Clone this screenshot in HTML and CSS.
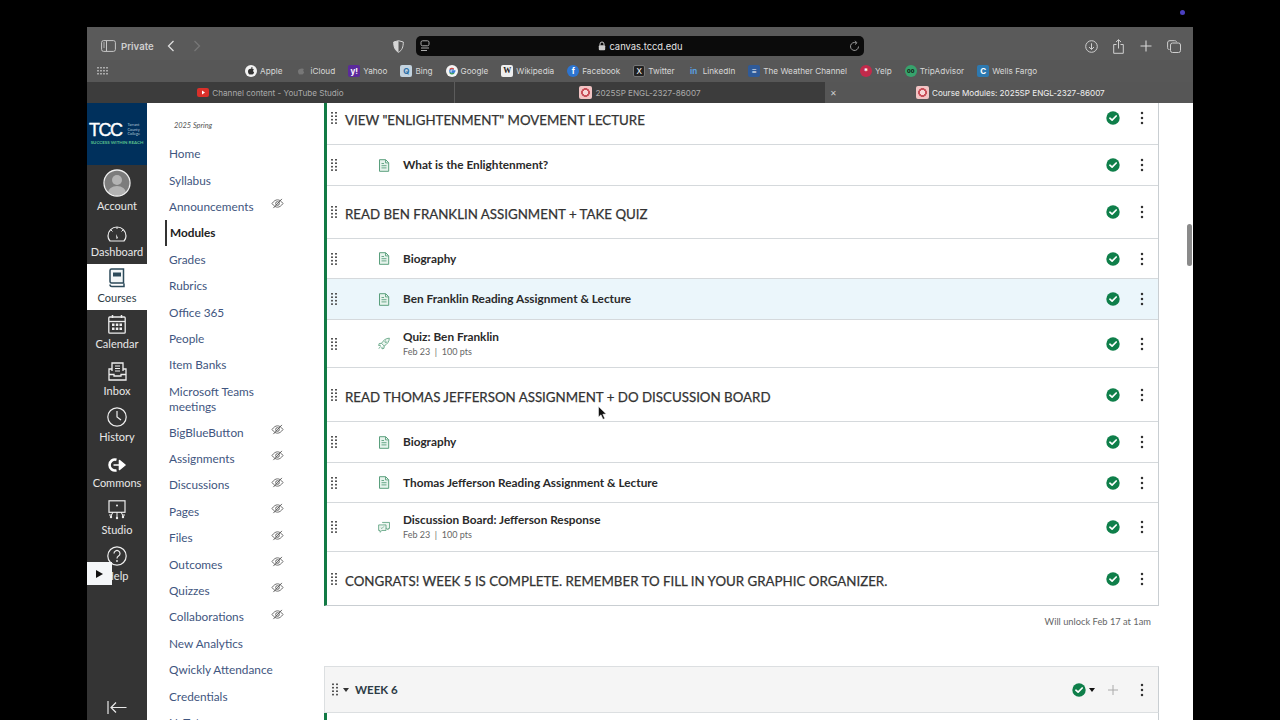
FILE: index.html
```html
<!DOCTYPE html>
<html lang="en">
<head>
<meta charset="utf-8">
<title>Course Modules: 2025SP ENGL-2327-86007</title>
<link rel="stylesheet" href="styles.css">
</head>
<body>
<svg class="defs" width="0" height="0" aria-hidden="true">
  <symbol id="drag" viewBox="0 0 6 12"><g fill="#555"><rect x="0" y="0" width="2" height="1.6"/><rect x="4" y="0" width="2" height="1.6"/><rect x="0" y="3.4" width="2" height="1.6"/><rect x="4" y="3.4" width="2" height="1.6"/><rect x="0" y="6.9" width="2" height="1.6"/><rect x="4" y="6.9" width="2" height="1.6"/><rect x="0" y="10.3" width="2" height="1.6"/><rect x="4" y="10.3" width="2" height="1.6"/></g></symbol>
  <symbol id="check" viewBox="0 0 14 14"><circle cx="7" cy="7" r="6.7" fill="#0f7f4a"/><path d="M3.9 7.2 6.1 9.2 10.2 5" fill="none" stroke="#fff" stroke-width="1.7" stroke-linecap="round" stroke-linejoin="round"/></symbol>
  <symbol id="kebab" viewBox="0 0 4 14"><g fill="#333"><circle cx="2" cy="2" r="1.25"/><circle cx="2" cy="7" r="1.25"/><circle cx="2" cy="12" r="1.25"/></g></symbol>
  <symbol id="page" viewBox="0 0 12 13"><path d="M1.5.7h6.2l3 3v8.6h-9.200z" fill="#e6f3ec" stroke="#5a9f7d"/><path d="M7.5.9v3h3M3.5 4.500h2.500M3.500 6.700h5M3.500 8.900h5" fill="none" stroke="#5a9f7d" stroke-width=".9"/></symbol>
  <symbol id="eye" viewBox="0 0 14 12"><path d="M1 6C3 3.200 5 2 7 2s4 1.200 6 4c-2 2.800-4 4-6 4S3 8.800 1 6z" fill="none" stroke="#555" stroke-width=".9"/><circle cx="7" cy="6" r="2" fill="none" stroke="#555" stroke-width="1"/><path d="M2.500 11 11.800 1" stroke="#555" stroke-width="1"/></symbol>
</svg>

<div class="window">
  <header class="chrome">
    <div class="toolbar">
      <div class="tool-left">
        <svg class="ti" width="15" height="12" viewBox="0 0 15 12"><rect x=".6" y=".6" width="13.800" height="10.800" rx="2" fill="none" stroke="#c8c8c8"/><path d="M5.500 1v10" stroke="#c8c8c8"/><path d="M2 3h2M2 5h2M2 7h2" stroke="#c8c8c8" stroke-width=".8"/></svg>
        <span class="private">Private</span>
        <svg class="back" width="8" height="12" viewBox="0 0 8 12"><path d="M6.500 1 1.500 6l5 5" fill="none" stroke="#ddd" stroke-width="1.300"/></svg>
        <svg class="fwd" width="8" height="12" viewBox="0 0 8 12"><path d="M1.500 1l5 5-5 5" fill="none" stroke="#777" stroke-width="1.300"/></svg>
      </div>
      <svg class="shield" width="11" height="13" viewBox="0 0 11 13"><path d="M5.500.7 10.300 2c0 5-1.200 8.300-4.800 10.300C1.900 10.300.7 7 .7 2z" fill="none" stroke="#d6d6d6"/><path d="M5.500.7v11.600C1.900 10.300.7 7 .7 2z" fill="#d6d6d6"/></svg>
      <div class="urlbar">
        <svg class="reader" width="10" height="12" viewBox="0 0 10 12"><rect x="1" y=".8" width="8" height="5" rx="1.500" fill="none" stroke="#aaa"/><path d="M1 8h8M1 10.500h6" stroke="#aaa"/></svg>
        <span class="url"><svg width="8" height="10" viewBox="0 0 8 10"><path d="M2 4.500V3a2 2 0 0 1 4 0v1.500" fill="none" stroke="#ccc"/><rect x=".8" y="4.300" width="6.400" height="5" rx="1" fill="#ccc"/></svg>canvas.tccd.edu</span>
        <svg class="reload" width="11" height="12" viewBox="0 0 11 12"><path d="M9.500 6.500a4 4 0 1 1-2.400-3.700" fill="none" stroke="#999"/><path d="M6 .8 8 2.800 6 4.500" fill="none" stroke="#999"/></svg>
      </div>
      <div class="tool-right">
        <svg width="13" height="13" viewBox="0 0 13 13"><circle cx="6.500" cy="6.500" r="5.800" fill="none" stroke="#cfcfcf"/><path d="M6.500 3.300v6M4 7l2.500 2.500L9 7" fill="none" stroke="#cfcfcf"/></svg>
        <svg width="11" height="15" viewBox="0 0 11 15"><path d="M3.500 5.500H.7v8.800h9.600V5.500H7.500M5.500 9.500V.8M3 3l2.500-2.300L8 3" fill="none" stroke="#cfcfcf"/></svg>
        <svg width="12" height="12" viewBox="0 0 12 12"><path d="M6 .5v11M.5 6h11" stroke="#d8d8d8" stroke-width="1.100"/></svg>
        <svg width="14" height="13" viewBox="0 0 14 13"><rect x="3.500" y="3" width="10" height="9.500" rx="2" fill="none" stroke="#cfcfcf"/><path d="M2.500 9.500C1.200 9.500.6 9 .6 7.500V3C.6 1.500 1.200.7 3 .7h4.500c1.200 0 2 .5 2.200 1.500" fill="none" stroke="#cfcfcf"/></svg>
      </div>
    </div>
    <div class="bookmarks">
      <svg class="apps" width="11" height="8" viewBox="0 0 11 8"><g fill="#aaa"><rect x="0" y="0" width="2" height="1.500"/><rect x="3" y="0" width="2" height="1.500"/><rect x="6" y="0" width="2" height="1.500"/><rect x="9" y="0" width="2" height="1.500"/><rect x="0" y="3" width="2" height="1.500"/><rect x="3" y="3" width="2" height="1.500"/><rect x="6" y="3" width="2" height="1.500"/><rect x="9" y="3" width="2" height="1.500"/><rect x="0" y="6" width="2" height="1.500"/><rect x="3" y="6" width="2" height="1.500"/><rect x="6" y="6" width="2" height="1.500"/><rect x="9" y="6" width="2" height="1.500"/></g></svg>
      <ul class="marks">
        <li><svg class="fav" width="12" height="12" viewBox="0 0 12 12"><circle cx="6" cy="6" r="6" fill="#f2f2f2"/><path d="M6 4c1-.6 2.200-.5 2.800.4-1 .7-.9 2.200.3 2.800C8.600 8.500 8 9.500 7.200 9.500 6.600 9.500 6.500 9.200 6 9.200s-.7.300-1.200.3C3.800 9.500 3 7.800 3 6.500 3 4.500 4.800 3.400 6 4zM6 3.600C6 2.700 6.600 2 7.500 2c0 .9-.6 1.600-1.500 1.600z" fill="#333"/></svg>Apple</li>
        <li><svg class="fav" width="12" height="12" viewBox="0 0 12 12"><path d="M6 3.800c1-.6 2.300-.5 2.900.4-1 .7-.9 2.200.3 2.800-.5 1.400-1.200 2.500-2 2.500-.6 0-.7-.3-1.200-.3s-.7.300-1.200.3C3.800 9.500 3 7.800 3 6.500c0-2 1.800-3.100 3-2.700z" fill="#777"/></svg>iCloud</li>
        <li><span class="fav tile yahoo">y!</span>Yahoo</li>
        <li><span class="fav tile bing">Q</span>Bing</li>
        <li><svg class="fav" width="12" height="12" viewBox="0 0 12 12"><circle cx="6" cy="6" r="6" fill="#f4f4f4"/><path d="M9.500 5.800H6.200v1.300h2A2.300 2.300 0 1 1 7.700 4.400" fill="none" stroke="#3c7fd9" stroke-width="1.300"/><path d="M3.800 4.500A2.600 2.600 0 0 1 7.700 4.200" fill="none" stroke="#d9483b" stroke-width="1.300"/><path d="M3.700 7.500A2.600 2.600 0 0 0 7.900 8" fill="none" stroke="#3f9f5a" stroke-width="1.300"/></svg>Google</li>
        <li><span class="fav tile wiki">W</span>Wikipedia</li>
        <li><span class="fav round fb">f</span>Facebook</li>
        <li><span class="fav tile tw">X</span>Twitter</li>
        <li><span class="fav tile li">in</span>LinkedIn</li>
        <li><span class="fav tile twc">≡</span>The Weather Channel</li>
        <li><span class="fav round yelp">*</span>Yelp</li>
        <li><span class="fav round trip">oo</span>TripAdvisor</li>
        <li><span class="fav tile wf">C</span>Wells Fargo</li>
      </ul>
    </div>
    <div class="tabs">
      <div class="tab t1"><svg class="yt" width="12" height="9" viewBox="0 0 12 9"><rect width="12" height="9" rx="2" fill="#d9302a"/><path d="M5 2.500 8 4.500 5 6.500z" fill="#fff"/></svg>Channel content - YouTube Studio</div>
      <div class="tab t2"><span class="tabico"></span>2025SP ENGL-2327-86007</div>
      <div class="tab t3"><span class="tabx">✕</span><span class="t3in"><span class="tabico"></span>Course Modules: 2025SP ENGL-2327-86007</span></div>
    </div>
  </header>

  <div class="app">
    <nav class="gnav">
      <div class="logo"><div class="logo-top"><span class="tcc">TCC</span><span class="tcc-sub">Tarrant<br>County<br>College</span></div><div class="tcc-tag">SUCCESS WITHIN REACH</div></div>
      <a class="gitem acct"><svg width="28" height="28" viewBox="0 0 28 28"><defs><clipPath id="av"><circle cx="14" cy="14" r="12.500"/></clipPath></defs><circle cx="14" cy="14" r="12.500" fill="#7c7c7c"/><g clip-path="url(#av)" fill="#b3b3b3"><circle cx="14" cy="11" r="5"/><ellipse cx="14" cy="24" rx="9" ry="7"/></g><circle cx="14" cy="14" r="13" fill="none" stroke="#f0f0f0" stroke-width="1.300"/></svg><span>Account</span></a>
      <a class="gitem"><svg width="20" height="16" viewBox="0 0 20 16"><path d="M3 15C1.600 13.500 1 11.500 1 10a9 9 0 0 1 18 0c0 1.500-.6 3.500-2 5z" fill="none" stroke="#eee" stroke-width="1.200"/><path d="M9 8l2 4-1.500 1z" fill="#eee"/><path d="M10 1v2M4 4l1.500 1.500M16 4l-1.500 1.500" stroke="#eee"/></svg><span>Dashboard</span></a>
      <a class="gitem active"><svg width="16" height="20" viewBox="0 0 16 20"><path d="M2.500 1h12v14h-12A1.500 1.500 0 0 1 1 13.500v-11A1.500 1.500 0 0 1 2.500 1z" fill="#f2f6f7" stroke="#2c4a5a" stroke-width="1.500"/><path d="M4 4.500h8v4H4z" fill="#2c4a5a"/><path d="M1 16.500c0 1.500 1 2 2 2h12v-3" fill="none" stroke="#2c4a5a" stroke-width="1.500"/></svg><span>Courses</span></a>
      <a class="gitem"><svg width="18" height="19" viewBox="0 0 18 19"><rect x=".8" y="2" width="16.400" height="16.200" rx="1" fill="none" stroke="#eee" stroke-width="1.300"/><path d="M1 6.500h16" stroke="#eee" stroke-width="1.300"/><path d="M4.500 0v3M13.500 0v3" stroke="#eee" stroke-width="1.500"/><g fill="#eee"><rect x="4" y="8.500" width="2.500" height="2.500"/><rect x="7.800" y="8.500" width="2.500" height="2.500"/><rect x="11.500" y="8.500" width="2.500" height="2.500"/><rect x="4" y="12.500" width="2.500" height="2.500"/><rect x="7.800" y="12.500" width="2.500" height="2.500"/><rect x="11.500" y="12.500" width="2.500" height="2.500"/></g></svg><span>Calendar</span></a>
      <a class="gitem"><svg width="19" height="19" viewBox="0 0 19 19"><path d="M4 9V1h11v8" fill="none" stroke="#eee" stroke-width="1.300"/><path d="M7 4h5M7 6.500h5M7 9h5" stroke="#eee" stroke-width="1.200"/><path d="M4 7H1v11h17V7h-3M1 12.500h5v1.500h7v-1.500h5" fill="none" stroke="#eee" stroke-width="1.300"/></svg><span>Inbox</span></a>
      <a class="gitem"><svg width="20" height="20" viewBox="0 0 20 20"><circle cx="10" cy="10" r="9.200" fill="none" stroke="#eee" stroke-width="1.200"/><path d="M10 4v6l4 3" fill="none" stroke="#eee" stroke-width="1.200"/></svg><span>History</span></a>
      <a class="gitem"><svg width="20" height="16" viewBox="0 0 20 16"><path d="M9.500 2.700A5.500 5.500 0 1 0 9.500 13.300" fill="none" stroke="#fff" stroke-width="2.600"/><path d="M6.500 8H15M12.500 3.500 18 8l-5.500 4.500z" fill="#fff" stroke="#fff" stroke-width="1.600" stroke-linejoin="round"/></svg><span>Commons</span></a>
      <a class="gitem"><svg width="20" height="20" viewBox="0 0 20 20"><rect x="2" y=".8" width="16" height="11.500" fill="none" stroke="#eee" stroke-width="1.200"/><circle cx="10" cy="5.500" r="1" fill="#eee"/><path d="M10 12v5M6 12l-2 4M14 12l2 4M2 15h3M15 15h3" stroke="#eee"/><circle cx="10" cy="18" r="1.200" fill="#eee"/><circle cx="4" cy="17" r="1.200" fill="#eee"/><circle cx="16" cy="17" r="1.200" fill="#eee"/></svg><span>Studio</span></a>
      <a class="gitem"><svg width="20" height="20" viewBox="0 0 20 20"><circle cx="10" cy="10" r="9.200" fill="none" stroke="#eee" stroke-width="1.200"/><path d="M7 7.500a3 3 0 1 1 4.500 2.600C10.500 10.700 10 11 10 12.500" fill="none" stroke="#eee" stroke-width="1.200"/><circle cx="10" cy="15" r=".9" fill="#eee"/></svg><span>Help</span></a>
      <div class="collapse"><svg width="20" height="13" viewBox="0 0 20 13"><path d="M1 0v13M19.500 6.500H4M9 1.500l-5 5 5 5" fill="none" stroke="#e8e8e8" stroke-width="1.200"/></svg></div>
    </nav>

    <aside class="cnav">
      <div class="term">2025 Spring</div>
      <ul class="clist">
        <li><a>Home</a></li>
        <li><a>Syllabus</a></li>
        <li><a>Announcements</a><svg class="eye"><use href="#eye"/></svg></li>
        <li class="current"><a>Modules</a></li>
        <li><a>Grades</a></li>
        <li><a>Rubrics</a></li>
        <li><a>Office 365</a></li>
        <li><a>People</a></li>
        <li><a>Item Banks</a></li>
        <li class="two"><a>Microsoft Teams<br>meetings</a></li>
        <li><a>BigBlueButton</a><svg class="eye"><use href="#eye"/></svg></li>
        <li><a>Assignments</a><svg class="eye"><use href="#eye"/></svg></li>
        <li><a>Discussions</a><svg class="eye"><use href="#eye"/></svg></li>
        <li><a>Pages</a><svg class="eye"><use href="#eye"/></svg></li>
        <li><a>Files</a><svg class="eye"><use href="#eye"/></svg></li>
        <li><a>Outcomes</a><svg class="eye"><use href="#eye"/></svg></li>
        <li><a>Quizzes</a><svg class="eye"><use href="#eye"/></svg></li>
        <li><a>Collaborations</a><svg class="eye"><use href="#eye"/></svg></li>
        <li><a>New Analytics</a></li>
        <li><a>Qwickly Attendance</a></li>
        <li><a>Credentials</a></li>
        <li><a>NuTutor</a></li>
      </ul>
    </aside>

    <main class="main">
      <section class="module">
        <div class="row head h54 first"><svg class="drag"><use href="#drag"/></svg><h3>VIEW "ENLIGHTENMENT" MOVEMENT LECTURE</h3><svg class="ok"><use href="#check"/></svg><svg class="keb"><use href="#kebab"/></svg></div>
        <div class="row item h41"><svg class="drag"><use href="#drag"/></svg><svg class="ic"><use href="#page"/></svg><div class="txt"><b>What is the Enlightenment?</b></div><svg class="ok"><use href="#check"/></svg><svg class="keb"><use href="#kebab"/></svg></div>
        <div class="row head h53"><svg class="drag"><use href="#drag"/></svg><h3>READ BEN FRANKLIN ASSIGNMENT + TAKE QUIZ</h3><svg class="ok"><use href="#check"/></svg><svg class="keb"><use href="#kebab"/></svg></div>
        <div class="row item h40"><svg class="drag"><use href="#drag"/></svg><svg class="ic"><use href="#page"/></svg><div class="txt"><b>Biography</b></div><svg class="ok"><use href="#check"/></svg><svg class="keb"><use href="#kebab"/></svg></div>
        <div class="row item h41 hl"><svg class="drag"><use href="#drag"/></svg><svg class="ic"><use href="#page"/></svg><div class="txt"><b>Ben Franklin Reading Assignment &amp; Lecture</b></div><svg class="ok"><use href="#check"/></svg><svg class="keb"><use href="#kebab"/></svg></div>
        <div class="row item h48"><svg class="drag"><use href="#drag"/></svg><svg class="ic" viewBox="0 0 13 13"><path d="M12.300.7C8.500.8 5.800 3 3.800 6.300l2.900 2.900c3.300-2 5.500-4.700 5.600-8.500zM3.800 6.300 1.300 6.500.7 8.700l2.200.1M6.700 9.200l-.2 2.500-2.200.6-.1-2.200M8.500 3.500a1 1 0 1 0 1 1M2.800 9.700.9 12.100" fill="#eef6f1" stroke="#5a9f7d" stroke-width=".9"/></svg><div class="txt"><b>Quiz: Ben Franklin</b><small>Feb 23 &nbsp;|&nbsp; 100 pts</small></div><svg class="ok"><use href="#check"/></svg><svg class="keb"><use href="#kebab"/></svg></div>
        <div class="row head h54"><svg class="drag"><use href="#drag"/></svg><h3>READ THOMAS JEFFERSON ASSIGNMENT + DO DISCUSSION BOARD</h3><svg class="ok"><use href="#check"/></svg><svg class="keb"><use href="#kebab"/></svg></div>
        <div class="row item h41"><svg class="drag"><use href="#drag"/></svg><svg class="ic"><use href="#page"/></svg><div class="txt"><b>Biography</b></div><svg class="ok"><use href="#check"/></svg><svg class="keb"><use href="#kebab"/></svg></div>
        <div class="row item h40"><svg class="drag"><use href="#drag"/></svg><svg class="ic"><use href="#page"/></svg><div class="txt"><b>Thomas Jefferson Reading Assignment &amp; Lecture</b></div><svg class="ok"><use href="#check"/></svg><svg class="keb"><use href="#kebab"/></svg></div>
        <div class="row item h49"><svg class="drag"><use href="#drag"/></svg><svg class="ic" viewBox="0 0 13 13"><path d="M4.500 1h8v6.500H11V9L9.300 7.500H8.500M.7 3.700h8v6H4.200l-2 2v-2H.7z" fill="#eef6f1" stroke="#5a9f7d" stroke-width=".9"/><path d="M3 6.500 4.200 7.700 6.400 5.300" fill="none" stroke="#5a9f7d" stroke-width=".8"/></svg><div class="txt"><b>Discussion Board: Jefferson Response</b><small>Feb 23 &nbsp;|&nbsp; 100 pts</small></div><svg class="ok"><use href="#check"/></svg><svg class="keb"><use href="#kebab"/></svg></div>
        <div class="row head h53"><svg class="drag"><use href="#drag"/></svg><h3>CONGRATS! WEEK 5 IS COMPLETE. REMEMBER TO FILL IN YOUR GRAPHIC ORGANIZER.</h3><svg class="ok"><use href="#check"/></svg><svg class="keb"><use href="#kebab"/></svg></div>
      </section>
      <p class="unlock">Will unlock Feb 17 at 1am</p>
      <section class="week">
        <svg class="drag big"><use href="#drag"/></svg>
        <span class="caret"></span>
        <h2>WEEK 6</h2>
        <svg class="ok"><use href="#check"/></svg>
        <span class="caret dark"></span>
        <svg class="plus" width="10" height="10" viewBox="0 0 10 10"><path d="M5 0v10M0 5h10" stroke="#aaa"/></svg>
        <svg class="keb"><use href="#kebab"/></svg>
      </section>
      <div class="nextmod"></div>
    </main>
  </div>
  <div class="thumb"></div>
  <button class="playbtn" aria-label="Play"><span></span></button>
</div>
<span class="dot"></span>
<svg class="cursor" width="9" height="14" viewBox="0 0 9 14"><path d="M.5.500v10.500l2.500-2.200 2 4.500 1.800-.8-2-4.300 3.400-.2z" fill="#111" stroke="#fff" stroke-width=".5"/></svg>
</body>
</html>
```
FILE: styles.css
```css
* { box-sizing: border-box; }
html, body { margin: 0; height: 720px; overflow: hidden; background: #000; }
body { padding: 27px 87px 0; font-family: Lato, "Open Sans", sans-serif; position: relative; }
.defs { position: absolute; }
ul { list-style: none; margin: 0; padding: 0; }
.window { width: 1106px; height: 693px; display: flex; flex-direction: column; background: #fff; position: relative; overflow: hidden; }

/* Browser chrome */
.chrome { font-family: Inter, "Liberation Sans", sans-serif; color: #ddd; flex: none; }
.toolbar { height: 33px; background: #5a5a5a; display: flex; align-items: center; padding: 5px 12px 0 14px; }
.tool-left { width: 297px; display: flex; align-items: center; }
.private { margin-left: 5px; font-size: 9.600px; font-weight: 600; color: #cfcfcf; width: 47px; }
.back { margin-right: 18px; margin-left: -1px; }
.shield { margin-right: 12px; margin-left: -5px; }
.urlbar { width: 448px; height: 20px; background: #0b0b0b; border-radius: 5px; display: flex; align-items: center; justify-content: space-between; padding: 0 4px; }
.url { font-size: 9.400px; color: #e4e4e4; display: flex; align-items: center; gap: 3px; margin-left: 2px; }
.tool-right { margin-left: auto; width: 96px; display: flex; align-items: center; justify-content: space-between; }
.bookmarks { height: 22px; background: #575757; display: flex; align-items: center; padding: 0 0 0 10px; }
.apps { flex: none; }
.marks { display: flex; align-items: center; gap: 13px; margin-left: 137px; font-size: 8.200px; color: #d8d8d8; }
.marks li { display: flex; align-items: center; gap: 3px; white-space: nowrap; }
.fav { flex: none; width: 12px; height: 12px; display: inline-flex; align-items: center; justify-content: center; font-size: 8px; font-weight: 700; color: #fff; line-height: 1; }
.tile { border-radius: 2px; }
.round { border-radius: 50%; }
.yahoo { background: #5b2a9b; }
.bing { background: #c3d3df; color: #2a6ea8; }
.wiki { background: #eee; color: #222; font-family: "Liberation Serif", serif; }
.fb { background: #2c74d0; }
.tw { background: #222; border: 1px solid #777; font-weight: 400; }
.li { color: #5aa0e0; }
.twc { background: #2f5a98; }
.yelp { background: #c22a4b; }
.trip { background: #37a36c; color: #111; font-size: 6px; }
.wf { background: #2d79b0; }
.tabs { height: 21px; display: flex; background: #3c3c3c; font-size: 8.150px; color: #aaa; }
.tab { display: flex; align-items: center; justify-content: center; gap: 3px; white-space: nowrap; }
.t1 { width: 368px; border-right: 1px solid #5c5c5c; }
.t2 { width: 370px; }
.t3 { flex: 1; background: #565656; color: #f0f0f0; justify-content: flex-start; }
.t3in { display: flex; align-items: center; gap: 3px; margin-left: 76px; }
.tabx { font-size: 8px; color: #ccc; margin-left: 5px; }
.tabico { width: 13px; height: 13px; border-radius: 2px; background: radial-gradient(circle, #f7d6d6 0 25%, #c9505a 30% 45%, #f2c4c4 50%); flex: none; }

/* App */
.app { flex: 1; display: flex; min-height: 0; background: #fff; }
.gnav { width: 60px; background: #343434; flex: none; position: relative; color: #e8e8e8; }
.logo { height: 62px; background: #00305c; padding-top: 19px; text-align: center; }
.logo-top { display: flex; align-items: center; padding-left: 2px; height: 16px; }
.tcc { font-family: "Liberation Sans", sans-serif; color: #fff; font-size: 18px; letter-spacing: -1.500px; font-weight: 400; line-height: 16px; -webkit-text-stroke: .4px #fff; }
.tcc-sub { font-size: 3.800px; line-height: 4.400px; color: #b5c8d8; text-align: left; margin-left: 6px; }
.tcc-tag { font-size: 4.450px; color: #5cc28d; white-space: nowrap; margin-top: 2px; font-weight: 700; }
.gitem { height: 46.300px; display: flex; flex-direction: column; align-items: center; justify-content: flex-end; font-size: 11px; line-height: 13px; padding-bottom: 6px; gap: 3px; }
.gitem svg { flex: none; }
.gitem span { display: block; }
.acct { height: 52.500px; gap: 2px; }
.active { background: #fff; color: #2d3b45; }
.collapse { position: absolute; left: 20px; top: 595px; }

.cnav { width: 177px; flex: none; padding-left: 22px; color: #3f5680; font-size: 11.800px; }
.term { font-size: 7.400px; font-style: italic; color: #555; height: 37.500px; padding-top: 18px; padding-left: 5px; line-height: 10px; }
.clist li { height: 26.400px; display: flex; align-items: center; position: relative; }
.clist a { line-height: 15px; }
.clist li.two { height: 41px; }
.clist .current { font-weight: 700; color: #222; padding-left: 1px; }
.clist .current::before { content: ""; position: absolute; left: -4px; top: 0; width: 1.500px; height: 26px; background: #333; }
.eye { position: absolute; left: 102px; top: 5px; width: 13px; height: 11px; }

/* Content */
.main { flex: 1; min-width: 0; padding-right: 34px; position: relative; overflow: hidden; }
.module { border-left: 3px solid #127a45; border-right: 1px solid #c9ced2; border-bottom: 1px solid #c9ced2; margin-top: -12px; }
.row { display: flex; align-items: center; border-bottom: 1px solid #d5d9dc; padding-left: 4px; padding-right: 14px; color: #2d3b45; }
.row:last-child { border-bottom: 0; }
.h40 { height: 40px; }
.h41 { height: 41px; }
.h48 { height: 48px; }
.h49 { height: 49px; }
.h53 { height: 53px; }
.h54 { height: 54px; }
.hl { background: #ebf6fb; }
.drag { width: 6px; height: 12px; flex: none; }
.drag.big { height: 13px; }
h3 { margin: 4px 0 0 8px; flex: 1; font-size: 13.300px; font-weight: 400; color: #333; -webkit-text-stroke: .25px #333; }
.ic { width: 12px; height: 13px; margin-left: 41px; flex: none; }
.txt { flex: 1; margin-left: 13px; margin-bottom: 1px; display: flex; flex-direction: column; }
.txt b { font-size: 11.800px; line-height: 15px; color: #2a2a2a; }
.txt small { font-size: 9px; line-height: 12px; margin-top: 2px; color: #666; }
.ok { width: 14px; height: 14px; flex: none; margin-right: 20px; }
.keb { width: 4px; height: 14px; flex: none; }
.unlock { margin: 0; height: 60px; padding-top: 10px; padding-right: 8px; text-align: right; font-size: 9.300px; line-height: 12px; color: #666; }
.week { height: 47px; background: #f5f5f5; border: 1px solid #dcdfe1; border-right-color: #c9ced2; display: flex; align-items: center; padding-left: 7px; padding-right: 14px; }
.caret { width: 0; height: 0; border: 3px solid transparent; border-top: 4px solid #333; border-bottom: 0; margin-left: 5px; flex: none; }
h2 { margin: 0 0 0 6px; flex: 1; font-size: 11.500px; font-weight: 700; color: #2d3b45; }
.week .ok { margin-right: 3px; }
.caret.dark { margin-left: 0; border-top-color: #111; border-left-width: 3.500px; border-right-width: 3.500px; }
.plus { margin-left: 13px; margin-right: 22px; }
.nextmod { height: 8px; border-left: 3px solid #127a45; border-right: 1px solid #c9ced2; }

/* Overlays */
.thumb { position: absolute; left: 1100px; top: 197px; width: 5px; height: 42px; border-radius: 3px; background: #8a8a8a; }
.playbtn { position: absolute; left: 0; top: 535px; width: 25px; height: 23px; border: 0; padding: 0; background: #f4f6f8; display: flex; align-items: center; justify-content: center; }
.playbtn span { width: 0; height: 0; border-left: 7px solid #111; border-top: 4px solid transparent; border-bottom: 4px solid transparent; }
.dot { position: absolute; left: 1180px; top: 10px; width: 5px; height: 5px; border-radius: 50%; background: #4a3fc0; }
.cursor { position: absolute; left: 598px; top: 406px; }
```
